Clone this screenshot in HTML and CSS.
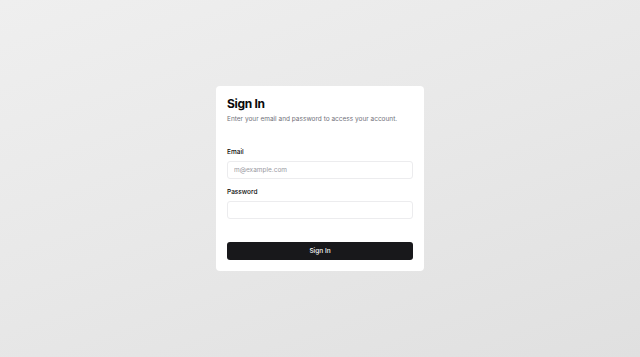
FILE: index.html
```html
<!DOCTYPE html>
<html>
<head>
<meta charset="utf-8">
<link rel="stylesheet" href="styles.css">
</head>
<body>
<main class="page">
  <form class="card">
    <div class="header">
      <h1 class="title">Sign In</h1>
      <p class="subtitle">Enter your email and password to access your account.</p>
    </div>
    <div class="fields">
      <label class="field">
        <span class="label">Email</span>
        <input class="input" type="email" placeholder="m@example.com">
      </label>
      <label class="field">
        <span class="label">Password</span>
        <input class="input" type="password">
      </label>
    </div>
    <button class="button" type="button">Sign In</button>
  </form>
</main>
</body>
</html>
```
FILE: styles.css
```css
* { box-sizing: border-box; }
html, body { margin: 0; height: 100%; }
body {
  font-family: Inter, "Liberation Sans", sans-serif;
  background: linear-gradient(160deg, #efefef 0%, #e8e8e8 50%, #e0e0e0 100%);
}
.page {
  height: 357px;
  display: flex;
  align-items: center;
  justify-content: center;
}
.card {
  width: 208px;
  background: #fff;
  border-radius: 4px;
  padding: 11px 11px 11px;
  display: flex;
  flex-direction: column;
}
.header { display: flex; flex-direction: column; gap: 4px; }
.title {
  margin: 0;
  font-size: 12px;
  font-weight: 700;
  letter-spacing: -0.3px;
  color: #0a0a0a;
  line-height: 14px;
}
.subtitle {
  margin: 0;
  font-size: 6.5px;
  color: #71717a;
  line-height: 9px;
}
.fields {
  display: flex;
  flex-direction: column;
  gap: 9px;
  margin-top: 24px;
}
.field { display: flex; flex-direction: column; gap: 5px; }
.label {
  font-size: 6.5px;
  font-weight: 500;
  color: #0a0a0a;
  line-height: 8px;
}
.input {
  height: 18px;
  border: 1px solid #ececee;
  border-radius: 3px;
  padding: 0 6px;
  font-family: inherit;
  font-size: 6.5px;
  color: #0a0a0a;
  background: #fff;
  outline: none;
}
.input::placeholder { color: #9a9aa2; }
.button {
  margin-top: 23px;
  height: 18px;
  border: none;
  border-radius: 3px;
  background: #18181b;
  color: #fafafa;
  font-family: inherit;
  font-size: 6.5px;
  font-weight: 500;
}
```
